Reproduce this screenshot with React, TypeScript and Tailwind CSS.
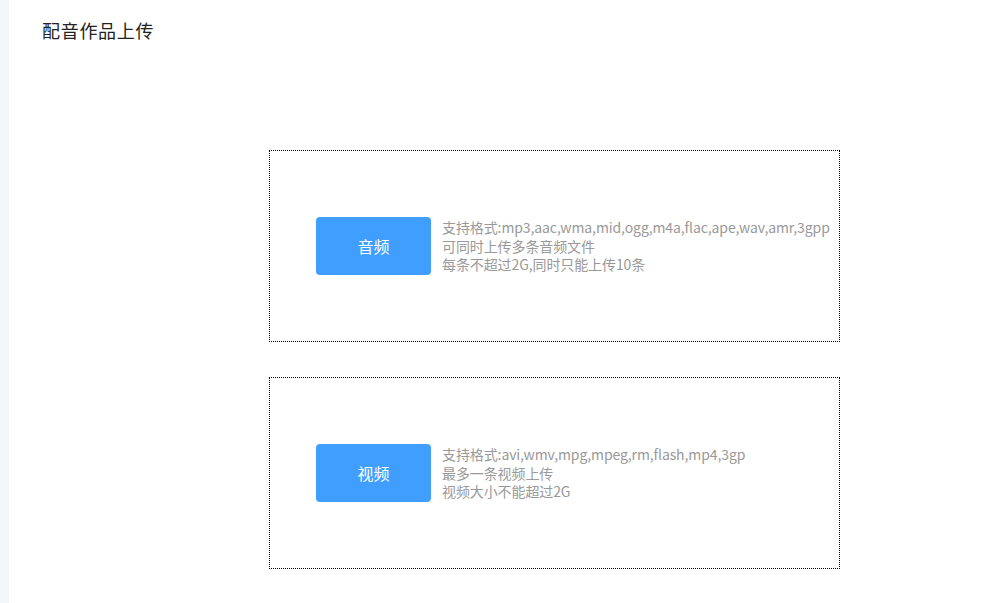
import React from "react";

interface UploadItem {
  label: string;
  tips: string[];
}

const items: UploadItem[] = [
  {
    label: "音频",
    tips: [
      "支持格式:mp3,aac,wma,mid,ogg,m4a,flac,ape,wav,amr,3gpp",
      "可同时上传多条音频文件",
      "每条不超过2G,同时只能上传10条",
    ],
  },
  {
    label: "视频",
    tips: ["支持格式:avi,wmv,mpg,mpeg,rm,flash,mp4,3gp", "最多一条视频上传", "视频大小不能超过2G"],
  },
];

const UploadBox: React.FC<{ item: UploadItem }> = ({ item }) => {
  return (
    <div className="w-[571px] h-[192px] border border-dotted border-black flex items-center pl-[46px]">
      <button className="w-[115px] h-[58px] rounded-[4px] bg-[#409eff] text-white text-[16px] shrink-0">
        {item.label}
      </button>
      <div className="ml-[11px] text-[14px] leading-[18.5px] tracking-[-0.1px] text-[#999999] whitespace-nowrap">
        {item.tips.map((t) => (
          <div key={t}>{t}</div>
        ))}
      </div>
    </div>
  );
};

export default function App() {
  return (
    <div
      className="flex w-[988px] h-[603px] bg-white overflow-hidden"
      style={{ fontFamily: '"Noto Sans CJK SC", "Noto Sans", sans-serif' }}
    >
      <div className="w-[9px] shrink-0 bg-[#f4f6fa]" />
      <div className="flex-1 pl-[33px] pt-[18px]">
        <h1 className="text-[18px] leading-[24px] tracking-[0.7px] text-[#222222] font-normal">配音作品上传</h1>
        <div className="ml-[227px] mt-[108px] flex flex-col gap-[35px]">
          {items.map((item) => (
            <UploadBox key={item.label} item={item} />
          ))}
        </div>
      </div>
    </div>
  );
}
